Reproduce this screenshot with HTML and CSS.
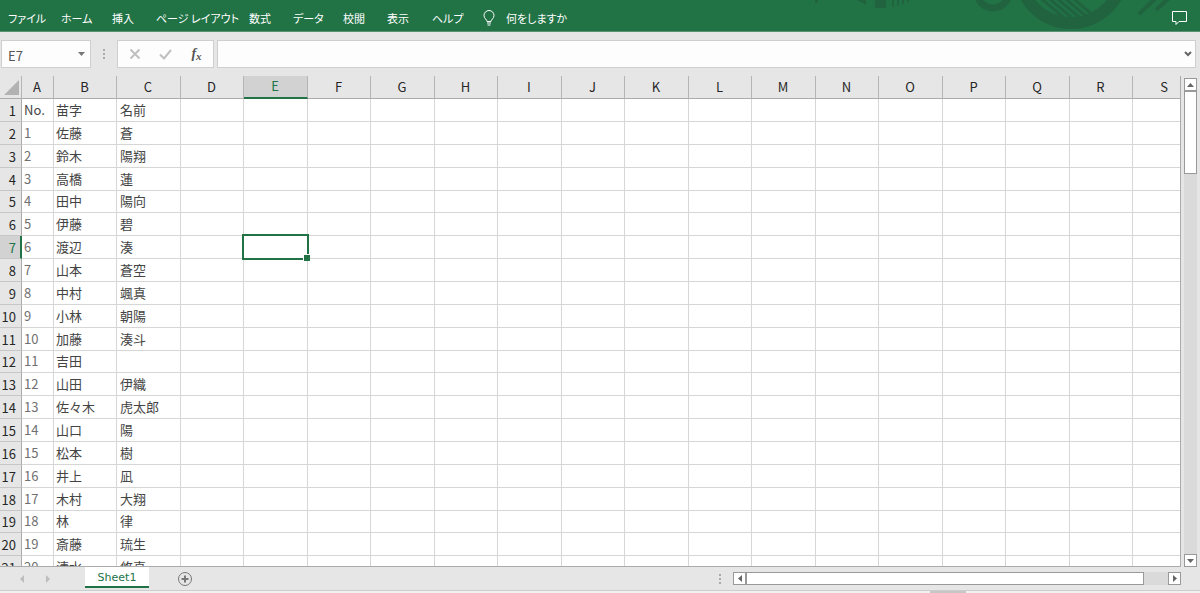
FILE: index.html
```html
<!DOCTYPE html>
<html lang="ja">
	<head>
		<meta charset="utf-8">
		<meta name="viewport" content="width=device-width, initial-scale=1">
		<title>Sheet1</title>
		<link rel="stylesheet" href="styles.css">
	</head>
	<body>
		<!-- ribbon -->
		<header class="ribbon">
			<svg class="ribbon-art" width="400" height="32" viewBox="0 0 400 32">
				<path d="M15 0h3v3h-3zM57 0h9v5zM75 0h11v8h-11zM92 0h2v7h-2zM97 0h2v6h-2zM102 0h2v4h-2zM107 0h2v2h-2z"/>
				<circle cx="193" cy="-8" r="16" stroke-width="7"/>
				<circle cx="271" cy="-29" r="52" stroke-width="12"/>
				<path class="stripe" d="M237 -5l26 22M245 -5l26 22M253 -5l26 22M261 -5l26 22M269 -5l24 20"/>
				<path class="slash" d="M339 14l16 -15M356 10l13 -12"/>
			</svg>
			<nav class="ribbon-tabs">
				<button>ファイル</button>
				<button>ホーム</button>
				<button>挿入</button>
				<button>ページ レイアウト</button>
				<button>数式</button>
				<button>データ</button>
				<button>校閲</button>
				<button>表示</button>
				<button>ヘルプ</button>
				<button class="tell-me">
					<svg width="12" height="16" viewBox="0 0 12 16"><path d="M4 11.5c0-2-3-3-3-6a5 5 0 0 1 10 0c0 3-3 4-3 6zM4 13h4M4.500 15h3"/></svg>
					何をしますか
				</button>
			</nav>
			<button class="comment-button" aria-label="コメント">
				<svg width="16" height="14" viewBox="0 0 16 14"><path d="M.5 .5h14v10H7l-3 3v-3H.5z"/></svg>
			</button>
		</header>

		<!-- formula bar -->
		<div class="formula-bar">
			<div class="name-box">
				<input type="text" value="E7" aria-label="名前ボックス">
				<button aria-label="名前の一覧"><svg width="7" height="4" viewBox="0 0 7 4"><path d="M0 0h7L3.500 4z"/></svg></button>
			</div>
			<span class="grip"></span>
			<div class="formula-buttons">
				<button aria-label="キャンセル"><svg width="12" height="12" viewBox="0 0 12 12"><path d="M1.500 1.500l9 9M10.500 1.500l-9 9"/></svg></button>
				<button aria-label="入力"><svg width="13" height="12" viewBox="0 0 13 12"><path d="M1 6.500l4 4L12 2"/></svg></button>
				<button class="fx" aria-label="関数の挿入"><i>f</i><i class="fx-x">x</i></button>
			</div>
			<div class="formula-box">
				<input type="text" aria-label="数式バー">
				<button aria-label="数式バーの展開"><svg width="8" height="6" viewBox="0 0 8 6"><path d="M1 1l3 3 3-3"/></svg></button>
			</div>
		</div>

		<!-- sheet -->
		<main class="sheet">
			<div class="grid-view">
				<table class="grid">
					<thead><tr id="columns"></tr></thead>
					<tbody id="rows"></tbody>
				</table>
			</div>
			<div class="scroll scroll-v">
				<button aria-label="上へ"><svg width="7" height="4" viewBox="0 0 7 4"><path d="M0 4h7L3.500 0z"/></svg></button>
				<div class="thumb"></div>
				<div class="track"></div>
				<button aria-label="下へ"><svg width="7" height="4" viewBox="0 0 7 4"><path d="M0 0h7L3.500 4z"/></svg></button>
			</div>
		</main>

		<!-- sheet tabs -->
		<footer class="tab-bar">
			<div class="tab-nav">
				<button aria-label="前のシート"><svg width="4" height="8" viewBox="0 0 4 8"><path d="M4 0v8L0 4z"/></svg></button>
				<button aria-label="次のシート"><svg width="4" height="8" viewBox="0 0 4 8"><path d="M0 0v8l4-4z"/></svg></button>
			</div>
			<button class="sheet-tab">Sheet1</button>
			<button class="add-sheet" aria-label="新しいシート">
				<svg width="16" height="16" viewBox="0 0 16 16"><circle cx="8" cy="8" r="6.500"/><path class="plus" d="M8 4.500v7M4.500 8h7"/></svg>
			</button>
			<span class="grip"></span>
			<div class="scroll scroll-h">
				<button aria-label="左へ"><svg width="4" height="7" viewBox="0 0 4 7"><path d="M4 0v7L0 3.500z"/></svg></button>
				<div class="thumb"></div>
				<div class="track"></div>
				<button aria-label="右へ"><svg width="4" height="7" viewBox="0 0 4 7"><path d="M0 0v7l4-3.500z"/></svg></button>
			</div>
		</footer>
		<div class="status-bar"><span></span></div>
		<script src="script.js"></script>
	</body>
</html>
```
FILE: styles.css
```css
* {
	box-sizing: border-box;
}
body {
	margin: 0;
	height: 100vh;
	display: flex;
	flex-direction: column;
	overflow: hidden;
	background: #e6e6e6;
	font-family: "Noto Sans CJK JP", sans-serif;
	font-size: 13px;
	color: #262626;
}
button {
	display: flex;
	align-items: center;
	justify-content: center;
	margin: 0;
	padding: 0;
	border: 0;
	background: transparent;
	font: inherit;
	color: inherit;
}
input {
	flex: 1;
	min-width: 0;
	padding: 0;
	border: 0;
	outline: 0;
	background: transparent;
	font: inherit;
	color: #555;
}

/* ribbon */
.ribbon {
	position: relative;
	flex: none;
	height: 32px;
	display: flex;
	justify-content: space-between;
	align-items: center;
	padding: 4px 12px 0 8px;
	background: #217346;
	border-bottom: 1px solid #5c9174;
	color: #fff;
}
.ribbon-art {
	position: absolute;
	top: 0;
	right: 0;
	fill: #21633f;
}
.ribbon-art circle, .ribbon-art .stripe, .ribbon-art .slash {
	fill: none;
	stroke: #21633f;
}
.ribbon-art .stripe {
	stroke-width: 3;
}
.ribbon-art .slash {
	stroke-width: 4;
}
.ribbon-tabs {
	position: relative;
	display: grid;
	grid-template-columns: 53px 51px 44px 93px 44px 50px 44px 45px 51px auto;
	font-size: 11px;
	font-feature-settings: "palt";
	white-space: nowrap;
}
.ribbon-tabs button {
	justify-content: flex-start;
}
.ribbon-tabs .tell-me {
	gap: 11px;
}
.tell-me svg, .comment-button svg {
	fill: none;
	stroke: #fff;
}
.comment-button {
	position: relative;
}

/* formula bar */
.formula-bar {
	flex: none;
	height: 44px;
	display: flex;
	align-items: center;
	padding: 0 4px 0 1px;
}
.name-box, .formula-buttons, .formula-box {
	display: flex;
	height: 28px;
	background: #fdfdfd;
	border: 1px solid #cfcfcf;
}
.name-box {
	width: 90px;
	padding: 0 5px 0 6px;
}
.name-box input {
	padding-top: 3px;
}
.name-box svg {
	fill: #777;
}
.grip {
	width: 2px;
	height: 10px;
	margin: 0 12px;
	background: repeating-linear-gradient(#aaa 0 2px, transparent 2px 4px);
}
.formula-buttons {
	width: 97px;
	padding: 0 1px;
	margin-right: 3px;
}
.formula-buttons button {
	flex: 1;
}
.formula-buttons svg {
	fill: none;
	stroke: #c0c0c0;
	stroke-width: 2;
}
.formula-buttons .fx {
	font: bold 14px "Liberation Serif", serif;
	color: #555;
}
.fx-x {
	font-size: 11px;
	padding-top: 4px;
}
.formula-box {
	flex: 1;
	padding: 0 3px 0 6px;
}
.formula-box svg {
	fill: none;
	stroke: #666;
	stroke-width: 2;
}

/* sheet */
.sheet {
	flex: 1;
	min-height: 0;
	display: flex;
	padding-right: 3px;
}
.grid-view {
	flex: 1;
	min-width: 0;
	overflow: hidden;
	background: linear-gradient(#e6e6e6 23px, #fff 23px);
	border-right: 1px solid #ababab;
	border-bottom: 1px solid #ababab;
}
.grid {
	width: 1195px;
	table-layout: fixed;
	border-collapse: separate;
	border-spacing: 0;
}
.grid th, .grid td {
	padding: 0 0 2px;
	border-right: 1px solid #d6d6d6;
	border-bottom: 1px solid #d6d6d6;
	line-height: 19px;
	white-space: nowrap;
}
.grid th {
	background: #e6e6e6;
	font-weight: normal;
}
.grid thead th {
	width: 63px;
	height: 23px;
	padding-right: 1px;
	border-right-color: #b5b5b5;
	border-bottom-color: #ababab;
}
.grid thead th:nth-child(2n) {
	width: 64px;
}
.grid thead th.corner {
	width: 22px;
	padding: 0;
	vertical-align: bottom;
}
.grid thead th:nth-child(2) {
	width: 32px;
}
.corner svg {
	display: block;
	margin: 0 2px 3px auto;
	fill: #b2b2b2;
}
.grid tbody tr {
	height: 23px;
}
.grid tbody tr:nth-child(7n+5) {
	height: 22px;
}
.grid tbody th {
	padding: 0 5px 0 0;
	text-align: right;
	border-right-color: #ababab;
	border-bottom-color: #c6c6c6;
}
.grid td {
	padding-left: 3px;
	color: #444;
}
.grid td:nth-child(2), .grid td:nth-child(3) {
	padding-left: 2px;
}
.grid td.number {
	color: #707070;
}
.grid thead th.active {
	background: #d2d2d2;
	border-bottom: 2px solid #217346;
	color: #217346;
}
.grid tbody th.active {
	background: #d2d2d2;
	border-right: 2px solid #217346;
	padding-right: 4px;
	color: #217346;
}
.grid td.selected {
	position: relative;
}
.selected::before {
	content: "";
	position: absolute;
	inset: -2px;
	border: 2px solid #217346;
}
.selected::after {
	content: "";
	position: absolute;
	right: -3px;
	bottom: -3px;
	width: 6px;
	height: 6px;
	background: #217346;
	border: solid #fff;
	border-width: 1px 0 0 1px;
}

/* scroll bars */
.scroll {
	display: flex;
}
.scroll button {
	flex: none;
	width: 13px;
	height: 13px;
	background: #fff;
	border: 1px solid #999;
}
.scroll svg {
	fill: #666;
}
.thumb {
	background: #fff;
	border: 1px solid #999;
}
.track {
	flex: 1;
	background: #dadada;
}
.scroll-v {
	flex-direction: column;
	width: 13px;
	margin: 2px 0 0 3px;
}
.scroll-v .thumb {
	height: 83px;
}
.scroll-h {
	width: 448px;
}
.scroll-h .thumb {
	width: 398px;
}

/* sheet tabs */
.tab-bar {
	flex: none;
	height: 23px;
	display: flex;
	align-items: center;
	padding-right: 19px;
}
.tab-nav {
	width: 85px;
	display: flex;
	gap: 22px;
	padding-left: 20px;
}
.tab-nav svg {
	fill: #bdbdbd;
}
.sheet-tab {
	align-self: flex-start;
	width: 64px;
	height: 21px;
	padding-top: 2px;
	background: #fff;
	border-bottom: 2px solid #217346;
	font-family: "DejaVu Sans", sans-serif;
	font-size: 11px;
	color: #217346;
}
.add-sheet {
	margin: 0 auto 0 28px;
}
.add-sheet svg {
	fill: none;
	stroke: #777;
}
.add-sheet .plus {
	stroke-width: 2;
}
.status-bar {
	flex: none;
	height: 3px;
	display: flex;
	justify-content: flex-end;
	padding-right: 234px;
	background: #f1f1f1;
	border-top: 1px solid #cdcdcd;
}
.status-bar span {
	width: 36px;
	background: #c6c6c6;
}
```
FILE: script.js
```js
const columns = 'ABCDEFGHIJKLMNOPQRS'.split('');
const people = [
	['No.', '苗字', '名前'],
	[1, '佐藤', '蒼'],
	[2, '鈴木', '陽翔'],
	[3, '高橋', '蓮'],
	[4, '田中', '陽向'],
	[5, '伊藤', '碧'],
	[6, '渡辺', '湊'],
	[7, '山本', '蒼空'],
	[8, '中村', '颯真'],
	[9, '小林', '朝陽'],
	[10, '加藤', '湊斗'],
	[11, '吉田', ''],
	[12, '山田', '伊織'],
	[13, '佐々木', '虎太郎'],
	[14, '山口', '陽'],
	[15, '松本', '樹'],
	[16, '井上', '凪'],
	[17, '木村', '大翔'],
	[18, '林', '律'],
	[19, '斎藤', '琉生'],
	[20, '清水', '悠真']
];
const active = { row: 7, column: 'E' };

let head = '<th class="corner"><svg width="15" height="15" viewBox="0 0 15 15"><path d="M15 0v15H0z"/></svg></th>';
columns.forEach((name) => {
	head += `<th class="${name === active.column ? 'active' : ''}">${name}</th>`;
});
document.getElementById('columns').innerHTML = head;

let body = '';
people.forEach((person, i) => {
	const row = i + 1;
	body += `<tr><th class="${row === active.row ? 'active' : ''}">${row}</th>`;
	columns.forEach((name, c) => {
		const value = person[c] === undefined ? '' : person[c];
		let cls = '';
		if (typeof value === 'number') cls = 'number';
		if (row === active.row && name === active.column) cls = 'selected';
		body += `<td class="${cls}">${value}</td>`;
	});
	body += '</tr>';
});
document.getElementById('rows').innerHTML = body;
```
